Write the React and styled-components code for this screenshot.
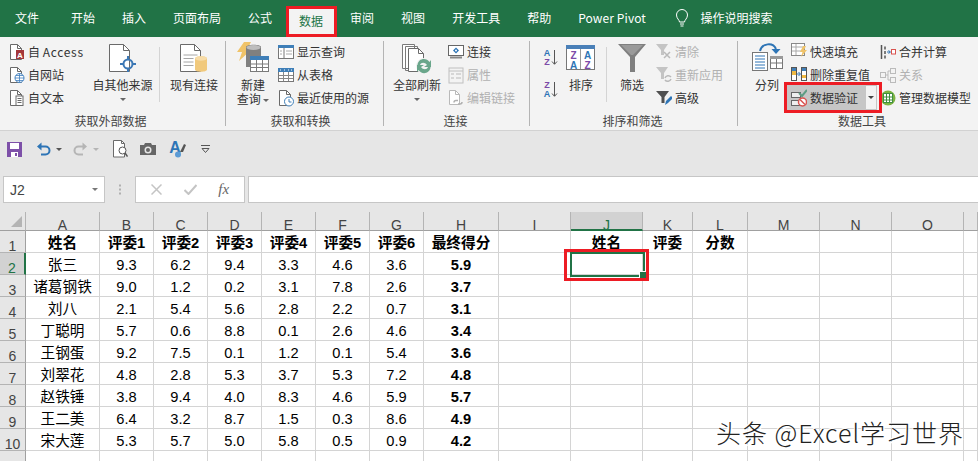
import React from 'react';
import styled, { createGlobalStyle } from 'styled-components';

const CJK = '"Noto Sans CJK SC", "Noto Sans", sans-serif';
const Global = createGlobalStyle`
  html, body { margin: 0; padding: 0; background: #e6e6e6; }
  #root { width: 978px; height: 461px; overflow: hidden; }
`;
const Page = styled.div`
  width: 978px; height: 461px; overflow: hidden; position: relative;
  background: #e6e6e6; font-family: ${CJK}; font-size: 12px; color: #333;
`;
const TabBar = styled.div`
  height: 37px; background: #217346; display: flex; align-items: stretch; box-sizing: border-box;
`;
const Tab = styled.div`
  display: flex; align-items: center; color: #fff; white-space: nowrap; position: relative;
  padding: ${p => p.$first ? '0 18.5px 2px 15px' : '0 13.5px 2px'};
  ${p => p.$active && `
    background: #f3f3f3; color: #217346; margin: 6px 0 0; padding: 0 10.5px 2px;
    border: 3px solid #ed1c24; height: 31px; box-sizing: border-box;
  `}
`;
const LatinTab = styled(Tab)`letter-spacing: .1px;`;
const Help = styled.div`
  display: flex; align-items: center; color: #fff; margin-left: 15px; gap: 12px; padding-bottom: 2px;
`;
const Ribbon = styled.div`
  height: 93px; background: #f3f3f3; border-bottom: 1px solid #d2d2d2; display: flex;
`;
const Group = styled.div`
  width: ${p => p.$w}px; margin-top: 4px; height: 85px; display: flex; flex-direction: column;
  flex: none; border-right: ${p => p.$last ? 0 : 1}px solid #b4b4b4; box-sizing: border-box;
`;
const GroupBody = styled.div`
  flex: 1; display: flex; padding-left: ${p => p.$pad}px; min-height: 0;
`;
const GroupLabel = styled.div`
  height: 16px; line-height: 22px; text-align: center; color: #444;
  transform: translateX(${p => p.$dx || 0}px);
`;
const Big = styled.div`
  width: ${p => p.$w}px; flex: none; display: flex; flex-direction: column; align-items: center;
  color: #333; line-height: 14px; white-space: nowrap;
`;
const BigIcon = styled.div`
  height: 37px; box-sizing: border-box; padding-bottom: ${p => p.$pb || 0}px;
  display: flex; align-items: flex-end; justify-content: center;
`;
const Caret = styled.span`
  display: inline-block; width: 0; height: 0; border: 3px solid transparent; border-top: 3px solid ${p => p.$c || '#666'};
  border-bottom: 0; vertical-align: middle; margin-left: ${p => p.$ml || 0}px;
`;
const CaretLine = styled.div`height: 14px; display: flex; align-items: center;`;
const Stack = styled.div`
  display: flex; flex-direction: column; flex: none; width: ${p => p.$w}px; margin-left: ${p => p.$ml || 0}px;
  margin-top: -1px;
`;
const Small = styled.div`
  height: 23px; display: flex; align-items: center; gap: 3px; white-space: nowrap; 
  color: ${p => p.$off ? '#b1b1b1' : '#333'};
`;
const SortStack = styled.div`
  display: flex; flex-direction: column; flex: none; width: 17px; padding-top: 7px; gap: 14px;
`;
const SmallIcon = styled.span`width: 16px; height: 18px; display: flex; flex: none;`;
const Latin = styled.span`letter-spacing: .7px;`;
const VLine = styled.div`
  width: 1px; height: 55px; background: #d4d4d4; margin: 6px ${p => p.$m}px 0; flex: none;
`;
const Validation = styled.div`
  position: relative; display: flex; margin: 0 0 0 -4px; height: 25px; width: 92px; align-items: stretch;
  &::after {
    content: ''; position: absolute; inset: -3px; border: 3px solid #ed1c24; pointer-events: none;
  }
`;
const ValidationMain = styled.div`
  width: 79px; background: #c6c6c6; display: flex; align-items: center; gap: 3px; padding-left: 4px; box-sizing: border-box;
`;
const ValidationDrop = styled.div`
  width: 11px; background: #f3f3f3; border: 1px solid #c6c6c6; border-width: 1px 1px 1px 0; box-sizing: border-box; display: flex; align-items: center; justify-content: center;
`;
const QuickBar = styled.div`
  height: 34px; padding-left: 7px; display: flex; align-items: center; background: #e6e6e6; margin-top: 1px;
`;
const QuickItem = styled.span`
  display: flex; align-items: center; margin-right: ${p => p.$mr}px; flex: none;
`;
const FormulaRow = styled.div`
  height: 27px; margin-top: 10px; padding-left: 3px; display: flex; align-items: stretch;
`;
const NameBox = styled.div`
  width: 102px; box-sizing: border-box; background: #fff; border: 1px solid #c6c6c6; display: flex; align-items: center;
  justify-content: space-between; padding: 0 6px; font: 14px "Liberation Sans", sans-serif; color: #444;
`;
const Dots = styled.div`
  width: 30px; display: flex; align-items: center; justify-content: center;
`;
const FxBox = styled.div`
  width: 110px; box-sizing: border-box; background: #fff; border: 1px solid #c6c6c6; display: flex; align-items: center;
  justify-content: space-around; padding: 0 4px;
`;
const Fx = styled.i`
  font: italic 15px "Liberation Serif", serif; color: #666; 
`;
const FormulaInput = styled.div`
  flex: 1; margin-left: 3px; background: #fff; border: 1px solid #c6c6c6; border-right: 0;
`;
const Sheet = styled.div`
  margin-top: 9px; display: grid; 
  grid-template-columns: 26px 74px repeat(6, 54px) 75px 72px 72px 50px 55px 72px 72px 72px 14px;
  grid-template-rows: 19px; grid-auto-rows: 22px;
  font: 14.67px "Liberation Sans", ${CJK}; color: #000;
`;
const Corner = styled.div`
  background: #e6e6e6; border-right: 1px solid #b4b4b4; border-bottom: 1px solid #a0a0a0; position: relative; box-sizing: border-box;
  display: flex; align-items: flex-end; justify-content: flex-end; padding: 0 3px 3px 0;
`;
const ColHead = styled.div`
  background: ${p => p.$on ? '#d2d2d2' : '#e6e6e6'}; box-sizing: border-box; text-align: center; padding-top: 8px; line-height: 10px;
  border-right: 1px solid #b4b4b4; border-bottom: ${p => p.$on ? '2px solid #217346' : '1px solid #a0a0a0'};
  color: ${p => p.$on ? '#217346' : '#444'}; font-size: 14px;
`;
const RowHead = styled.div`
  background: ${p => p.$on ? '#d2d2d2' : '#e6e6e6'}; box-sizing: border-box; text-align: center; padding-top: 10px; line-height: 10px;
  border-right: ${p => p.$on ? '2px solid #217346' : '1px solid #a0a0a0'}; border-bottom: 1px solid #b4b4b4;
  color: ${p => p.$on ? '#217346' : '#444'}; font-size: 14px;
`;
const Cell = styled.div`
  background: #fff; box-sizing: border-box; text-align: center; padding-top: 5px; line-height: 15px; white-space: nowrap;
  border-right: 1px solid #d4d4d4; border-bottom: 1px solid #d4d4d4; position: relative;
  font-weight: ${p => p.$bold ? 700 : 400};
  ${p => p.$sel && `
    z-index: 2;
    &::before { content: ''; position: absolute; left: -1px; top: -1px; right: -3px; bottom: -3px; border: 2px solid #217346; }
    &::after { content: ''; position: absolute; left: -7px; top: -4px; right: -7px; bottom: -7px; border: 3px solid #ed1c24; }
  `}
`;
const Handle = styled.span`
  position: absolute; right: -4px; bottom: -4px; width: 7px; height: 7px; background: #217346;
  border: solid #fff; border-width: 1px 0 0 1px; box-sizing: border-box; z-index: 1;
`;
const Watermark = styled.div`
  position: absolute; left: 716px; top: 414px; white-space: nowrap; font: 300 25px "Noto Sans CJK SC", sans-serif; color: #222;
  letter-spacing: 1px; text-shadow: 1.5px 1.5px 0 #fff, -1px -1px 0 #fff;
`;

/* ---------- icons ---------- */
const S = ({ w = 16, h = 18, children }) => <svg width={w} height={h} viewBox={`0 0 ${w} ${h}`} style={{ display: 'block', flex: 'none' }}>{children}</svg>;
const Doc = ({ x = 1.5, y = 1.5, w = 11, h = 15, f = 4, c = '#6a6a6a' }) => (
  <g fill="none" stroke={c}>
    <path d={`M${x} ${y}h${w - f}l${f} ${f}v${h - f}h-${w}z`} fill="#fff" />
    <path d={`M${x + w - f} ${y}v${f}h${f}`} />
  </g>
);
const IAccess = () => <S><Doc /><rect x="7" y="7" width="8" height="9" fill="#a4373a" /><text x="11" y="14.5" fontSize="8" fontWeight="700" textAnchor="middle" fill="#fff" fontFamily="Liberation Sans">A</text></S>;
const IWeb = () => <S><Doc /><circle cx="10.5" cy="12" r="4.5" fill="#fff" stroke="#3f7fbf" /><path d="M6 12h9M10.5 7.5v9M7 9.5h7M7 14.5h7" stroke="#3f7fbf" strokeWidth=".8" /></S>;
const IText = () => <S><Doc /><rect x="7" y="7" width="7" height="9.5" fill="#fff" stroke="#6a6a6a" /><path d="M8.5 9.5h4M8.5 11.5h4M8.5 13.5h4" stroke="#6a6a6a" /></S>;
const IOther = () => (
  <S w={30} h={32}>
    <Doc x={1.5} y={1.5} w={20} h={27} f={6} />
    <g fill="none" stroke="#3c78b5" strokeWidth="2">
      <circle cx="20" cy="21" r="4.5" /><path d="M20 13v4M20 25v4M12 21h4M24 21h4" />
    </g>
  </S>
);
const IExisting = () => (
  <S w={30} h={32}>
    <Doc x={1.5} y={1.5} w={20} h={27} f={6} />
    <path d="M4.5 12h14M4.5 15.5h10M4.5 19h10M4.5 22.5h10" stroke="#a6a6a6" />
    <path d="M16 15.5c0-3 12-3 12 0v11c0 3-12 3-12 0z" fill="#f1c97c" />
    <ellipse cx="22" cy="15.5" rx="6" ry="2.2" fill="#f7dca8" />
  </S>
);
const INewQuery = () => (
  <S w={34} h={34}>
    <path d="M8 1h7l-4 8h4L3 20l3-9H1z" fill="#f0c368" />
    <path d="M10 6c0-3 15-3 15 0v20H10z" fill="#808080" />
    <ellipse cx="17.5" cy="6.5" rx="7" ry="2.4" fill="#bdbdbd" />
    <rect x="14.5" y="15.5" width="18" height="15" fill="#fff" stroke="#7a7a7a" />
    <rect x="14" y="15" width="19" height="4" fill="#3f7fb8" />
    <path d="M20.5 19v11M26.5 19v11M15 23h17M15 26.5h17" stroke="#7a7a7a" />
  </S>
);
const ITable = () => <S><rect x=".5" y="2.5" width="15" height="13" fill="#fff" stroke="#777" /><rect x="0" y="2" width="16" height="3" fill="#3f7fb8" /><path d="M6 5v10" stroke="#777" /><path d="M8 8h6M8 11h6M2 8h2M2 11h2" stroke="#aaa" /></S>;
const ITableDot = () => <S><rect x=".5" y="2.5" width="15" height="13" fill="#fff" stroke="#777" /><rect x="0" y="2" width="16" height="4" fill="#3f7fb8" /><path d="M2 4h1M6 4h1M10 4h1M13 4h1" stroke="#fff" /><path d="M5.5 6v9M10.5 6v9M1 9.5h14M1 12.5h14" stroke="#888" /></S>;
const IRecent = () => <S><Doc /><circle cx="11" cy="12.5" r="4.5" fill="#fff" stroke="#3f7fb8" /><path d="M11 10v3h2.5" fill="none" stroke="#3f7fb8" /></S>;
const IRefresh = () => (
  <S w={32} h={32}>
    <path d="M1.5 1.5h12v24h-12zM4.5 3.5h12v24h-12z" fill="#fff" stroke="#7a7a7a" />
    <Doc x={7.5} y={5.5} w={15} h={23} f={5} />
    <circle cx="23" cy="23" r="8" fill="#f3f3f3" />
    <path d="M16.5 22c.5-7 9-8 12-3l1.500-2v7h-7l3-2c-2-3-6-3-7 0zM29.500 24c-.5 7-9 8-12 3l-1.500 2v-7h7l-3 2c2 3 6 3 7 0z" fill="#6aa68b" />
  </S>
);
const IConn = () => <S><rect x=".5" y="2.5" width="15" height="10" fill="#fff" stroke="#666" /><path d="M2 14.500h12" stroke="#888" strokeWidth="2" /><path d="M8 4.500l3 3-3 3-3-3z" fill="#2e75b6" /><circle cx="8" cy="7.500" r="1" fill="#fff" /></S>;
const IProps = () => <S><rect x="1" y="2" width="14" height="15" fill="none" stroke="#c0c0c0" /><path d="M1 5h14" stroke="#c0c0c0" /><path d="M3 8h3M8 8h5M3 12h3M8 12h5" stroke="#b9b9b9" /></S>;
const ILinks = () => <S><Doc w={10} h={14} c="#b9b9b9" /><path d="M6 13.500a2 2 0 0 1 2-2h2M14 13a2 2 0 0 1-2 2h-2" fill="none" stroke="#b0b0b0" strokeWidth="1.500" /></S>;
const SortText = ({ x, y, c, s = 9, children }) => <text x={x} y={y} fontSize={s} fontFamily="Liberation Sans" fontWeight="700" textAnchor="middle" fill={c}>{children}</text>;
const ISort = ({ top, bot, tc, bc }) => (
  <S w={15} h={18}>
    <SortText x={4} y={8} c={tc}>{top}</SortText>
    <SortText x={4} y={17} c={bc}>{bot}</SortText>
    <path d="M11.500 2v14M9 13.500l2.500 2.800 2.500-2.800" fill="none" stroke="#555" />
  </S>
);
const ISortBig = () => (
  <S w={30} h={26}>
    <rect x=".5" y=".5" width="28" height="24" fill="#fff" stroke="#777" />
    <rect x="0" y="0" width="29" height="4" fill="#4a80b8" />
    <path d="M14.500 4v20" stroke="#999" />
    <SortText x={7.5} y={14} c="#7c4ba8" s={10}>Z</SortText>
    <SortText x={7.5} y={24} c="#2e75b6" s={10}>A</SortText>
    <SortText x={21.5} y={14} c="#2e75b6" s={10}>A</SortText>
    <SortText x={21.5} y={24} c="#7c4ba8" s={10}>Z</SortText>
  </S>
);
const IFunnel = () => <S w={28} h={28}><path d="M0 0h28L17 13v15h-5V13z" fill="#7f7f7f" /><path d="M3 1h22L15 11h-2z" fill="#9a9a9a" /></S>;
const IClear = () => <S><path d="M0 1h12L8 7v5H5V7z" fill="#c4c4c4" /><path d="M8 9l6 6M14 9l-6 6" stroke="#b9b9b9" strokeWidth="1.500" /></S>;
const IReapply = () => <S><path d="M0 1h12L8 7v6H5V7z" fill="#c4c4c4" /><path d="M9 12a3.500 3.500 0 0 1 6-1M15 13a3.500 3.500 0 0 1-6 1" fill="none" stroke="#b9b9b9" strokeWidth="1.500" /></S>;
const IAdvanced = () => <S><path d="M0 2h13L8.500 8v6h-3V8z" fill="#505050" /><path d="M9 16l1-4 5-5 2 2-5 5z" fill="#2e75b6" /></S>;
const ISplit = () => (
  <S w={31} h={29}>
    <rect x=".5" y="10.500" width="15" height="18" fill="#fff" stroke="#777" />
    <path d="M3 14h10M3 17h10M3 20h10M3 23h10M3 26h10" stroke="#2e75b6" />
    <rect x="18.500" y="14.500" width="12" height="12" fill="#fff" stroke="#777" />
    <rect x="18" y="14" width="13" height="3" fill="#9a9a9a" />
    <path d="M24.500 17v9M19 21h11" stroke="#777" />
    <path d="M8 9C10 1 21 0 24 7" fill="none" stroke="#2e75b6" strokeWidth="2" />
    <path d="M19.500 7h9l-4.500 5z" fill="#2e75b6" />
  </S>
);
const IFlash = () => <S><rect x=".5" y="1.500" width="13" height="12" fill="#fff" stroke="#888" /><path d="M1 5h12M1 9h12M5 2v11" stroke="#aaa" /><path d="M12 4h3l-2 4h3l-6 7 1.500-5h-2.500z" fill="#f0c368" /></S>;
const IDup = () => <S><rect x=".5" y="2.500" width="5" height="13" fill="#fff" stroke="#555" /><rect x="1" y="6" width="4" height="4" fill="#f0b942" /><rect x="1" y="3" width="4" height="3" fill="#3f7fb8" /><rect x="10.500" y="2.500" width="5" height="13" fill="#fff" stroke="#555" /><rect x="11" y="3" width="4" height="3" fill="#3f7fb8" /><rect x="11" y="10" width="4" height="3" fill="#f0b942" /><path d="M6 9h3M7.500 7l2 2-2 2" fill="none" stroke="#2e75b6" /></S>;
const IValid = () => <S w={16} h={18}><rect x=".5" y="3.500" width="9" height="5" fill="#eee" stroke="#666" /><rect x=".5" y="11.500" width="8" height="5" fill="#eee" stroke="#666" /><path d="M8 4l3 3 5-6" fill="none" stroke="#5e9c83" strokeWidth="2" /><circle cx="11.500" cy="13" r="4" fill="#fff" stroke="#d9534f" strokeWidth="1.500" /><path d="M9 10.500l5 5" stroke="#d9534f" strokeWidth="1.500" /></S>;
const IMerge = () => <S><path d="M1.500 2v14M5 3.500v3M5 8v3M5 12.500v3" fill="none" stroke="#555" strokeWidth="1.500" /><path d="M7 9h3M8.500 7.500l2 1.500-2 1.500" fill="none" stroke="#2e75b6" /><rect x="11.500" y="6.500" width="4" height="4.500" fill="#fff" stroke="#d9534f" /></S>;
const IRel = () => <S><g fill="#f3f3f3" stroke="#bbb"><rect x=".5" y="6.500" width="5" height="5" /><rect x="10.500" y="2.500" width="5" height="5" /><rect x="10.500" y="11.500" width="5" height="5" /></g><path d="M5.500 9H8M8 5h2.500M8 14h2.500M8 5v9" fill="none" stroke="#bbb" /></S>;
const IModel = () => <S><circle cx="8" cy="9" r="7.500" fill="#7cb342" /><rect x="3.500" y="4.500" width="9" height="9" fill="#fff" stroke="#3f8f3f" /><path d="M6.500 5v8M9.500 5v8M4 8h8M4 11h8" stroke="#3f8f3f" /></S>;
const IBulb = () => <S w={14} h={18}><path d="M4.500 13c0-2-3-3.500-3-7a5.500 5.500 0 0 1 11 0c0 3.500-3 5-3 7z" fill="none" stroke="#fff" /><path d="M5 15h4M5.500 17h3" stroke="#fff" /></S>;
const ISave = () => <S w={15} h={15}><path d="M0 0h15v15H0z" fill="#7d50a8" /><rect x="3" y="1" width="9" height="6" fill="#fff" /><rect x="4" y="10" width="7" height="5" fill="#fff" /><rect x="8" y="11" width="2" height="3" fill="#7d50a8" /></S>;
const IUndo = ({ c = '#2e75b6', flip }) => (
  <S w={15} h={14}>
    <g transform={flip ? 'translate(15 0) scale(-1 1)' : undefined}>
      <path d="M3 4.500h6.500a4 4 0 0 1 0 8H5" fill="none" stroke={c} strokeWidth="2" />
      <path d="M5.500 .5L1 4.500l4.500 4z" fill={c} />
    </g>
  </S>
);
const IPreview = () => <S w={15} h={18}><Doc x={.5} y={.5} w={11} h={16.500} f={3} /><circle cx="9.500" cy="10.500" r="3.500" fill="#fff" stroke="#555" /><path d="M12 13l2.500 3.500" stroke="#555" strokeWidth="1.500" /></S>;
const ICamera = () => <S w={16} h={14}><path d="M0 3h4l1-2h6l1 2h4v10H0z" fill="#666" /><circle cx="8" cy="8" r="3.500" fill="#e6e6e6" /><circle cx="8" cy="8" r="2" fill="#666" /></S>;
const IABrush = () => (
  <S w={18} h={18}>
    <text x="6" y="13" fontSize="16" fontFamily="Liberation Sans" fontWeight="700" textAnchor="middle" fill="#2e75b6">A</text>
    <path d="M11 12l4-8 2 1-3 7z" fill="#555" /><circle cx="9" cy="14.500" r="3" fill="#5b9bd5" />
  </S>
);
const IMore = () => <S w={9} h={9}><path d="M0 .5h9" stroke="#555" /><path d="M1 3.500h7L4.500 7.500z" fill="none" stroke="#555" /></S>;
const IX = () => <S w={11} h={11}><path d="M.5 .5l10 10M10.500 .5l-10 10" stroke="#c4c4c4" strokeWidth="1.500" /></S>;
const ICheck = () => <S w={13} h={11}><path d="M.5 6l4 4 8-9" fill="none" stroke="#c4c4c4" strokeWidth="2" /></S>;
const IDots = () => <S w={3} h={11}><path d="M1 .5v2M1 4.500v2M1 8.500v2" stroke="#b0b0b0" strokeWidth="2" /></S>;
const ICorner = () => <S w={11} h={11}><path d="M11 0v11H0z" fill="#b4b4b4" /></S>;

/* ---------- data ---------- */
const columns = ['A','B','C','D','E','F','G','H','I','J','K','L','M','N','O',''];
const rows = [
  ['姓名','评委1','评委2','评委3','评委4','评委5','评委6','最终得分','','姓名','评委','分数'],
  ['张三','9.3','6.2','9.4','3.3','4.6','3.6','5.9'],
  ['诸葛钢铁','9.0','1.2','0.2','3.1','7.8','2.6','3.7'],
  ['刘八','2.1','5.4','5.6','2.8','2.2','0.7','3.1'],
  ['丁聪明','5.7','0.6','8.8','0.1','2.6','4.6','3.4'],
  ['王钢蛋','9.2','7.5','0.1','1.2','0.1','5.4','3.6'],
  ['刘翠花','4.8','2.8','5.3','3.7','5.3','7.2','4.8'],
  ['赵铁锤','3.8','9.4','4.0','8.3','4.6','5.9','5.7'],
  ['王二美','6.4','3.2','8.7','1.5','0.3','8.6','4.9'],
  ['宋大莲','5.3','5.7','5.0','5.8','0.5','0.9','4.2'],
  [],
];
const SmallBtn = ({ icon, off, children }) => <Small $off={off}><SmallIcon>{icon}</SmallIcon><span>{children}</span></Small>;

export default function App() {
  return (
    <Page>
      <Global />
      <TabBar>
        <Tab $first>文件</Tab><Tab>开始</Tab><Tab>插入</Tab><Tab>页面布局</Tab><Tab>公式</Tab>
        <Tab $active>数据</Tab><Tab>审阅</Tab><Tab>视图</Tab><Tab>开发工具</Tab><Tab>帮助</Tab>
        <LatinTab>Power Pivot</LatinTab>
        <Help><IBulb />操作说明搜索</Help>
      </TabBar>
      <Ribbon>
        <Group $w={226}>
          <GroupBody $pad={9}>
            <Stack $w={81}>
              <SmallBtn icon={<IAccess />}>自 <Latin>Access</Latin></SmallBtn>
              <SmallBtn icon={<IWeb />}>自网站</SmallBtn>
              <SmallBtn icon={<IText />}>自文本</SmallBtn>
            </Stack>
            <Big $w={65}><BigIcon $pb={3}><IOther /></BigIcon>自其他来源<CaretLine><Caret /></CaretLine></Big>
            <VLine $m={4} />
            <Big $w={60}><BigIcon $pb={3}><IExisting /></BigIcon>现有连接</Big>
          </GroupBody>
          <GroupLabel $dx={-2}>获取外部数据</GroupLabel>
        </Group>
        <Group $w={158}>
          <GroupBody $pad={2}>
            <Big $w={50}><BigIcon $pb={3}><INewQuery /></BigIcon>新建<span>查询 <Caret /></span></Big>
            <Stack $w={104}>
              <SmallBtn icon={<ITable />}>显示查询</SmallBtn>
              <SmallBtn icon={<ITableDot />}>从表格</SmallBtn>
              <SmallBtn icon={<IRecent />}>最近使用的源</SmallBtn>
            </Stack>
          </GroupBody>
          <GroupLabel $dx={-4}>获取和转换</GroupLabel>
        </Group>
        <Group $w={146}>
          <GroupBody $pad={5}>
            <Big $w={56}><BigIcon $pb={3}><IRefresh /></BigIcon>全部刷新<CaretLine><Caret /></CaretLine></Big>
            <Stack $w={80} $ml={3}>
              <SmallBtn icon={<IConn />}>连接</SmallBtn>
              <SmallBtn icon={<IProps />} off>属性</SmallBtn>
              <SmallBtn icon={<ILinks />} off>编辑链接</SmallBtn>
            </Stack>
          </GroupBody>
          <GroupLabel $dx={-1}>连接</GroupLabel>
        </Group>
        <Group $w={208}>
          <GroupBody $pad={13}>
            <SortStack>
              <ISort top="A" bot="Z" tc="#2e75b6" bc="#7c4ba8" />
              <ISort top="Z" bot="A" tc="#7c4ba8" bc="#2e75b6" />
            </SortStack>
            <Big $w={42}><BigIcon $pb={7}><ISortBig /></BigIcon>排序</Big>
            <VLine $m={4} />
            <Big $w={42}><BigIcon $pb={6}><IFunnel /></BigIcon>筛选</Big>
            <Stack $w={70} $ml={3}>
              <SmallBtn icon={<IClear />} off>清除</SmallBtn>
              <SmallBtn icon={<IReapply />} off>重新应用</SmallBtn>
              <SmallBtn icon={<IAdvanced />}>高级</SmallBtn>
            </Stack>
          </GroupBody>
          <GroupLabel $dx={-1}>排序和筛选</GroupLabel>
        </Group>
        <Group $w={240} $last>
          <GroupBody $pad={11}>
            <Big $w={36}><BigIcon $pb={7}><ISplit /></BigIcon>分列</Big>
            <Stack $w={91} $ml={6}>
              <SmallBtn icon={<IFlash />}>快速填充</SmallBtn>
              <SmallBtn icon={<IDup />}>删除重复值</SmallBtn>
              <Validation>
                <ValidationMain><SmallIcon as="span"><IValid /></SmallIcon><span>数据验证</span></ValidationMain>
                <ValidationDrop><Caret $c="#444" /></ValidationDrop>
              </Validation>
            </Stack>
            <Stack $w={98} $ml={-2}>
              <SmallBtn icon={<IMerge />}>合并计算</SmallBtn>
              <SmallBtn icon={<IRel />} off>关系</SmallBtn>
              <SmallBtn icon={<IModel />}>管理数据模型</SmallBtn>
            </Stack>
          </GroupBody>
          <GroupLabel $dx={4}>数据工具</GroupLabel>
        </Group>
      </Ribbon>
      <QuickBar>
        <QuickItem $mr={14}><ISave /></QuickItem>
        <QuickItem $mr={5}><IUndo /></QuickItem>
        <QuickItem $mr={11}><Caret $c="#555" /></QuickItem>
        <QuickItem $mr={5}><IUndo c="#b5b5b5" flip /></QuickItem>
        <QuickItem $mr={14}><Caret $c="#b5b5b5" /></QuickItem>
        <QuickItem $mr={12}><IPreview /></QuickItem>
        <QuickItem $mr={13}><ICamera /></QuickItem>
        <QuickItem $mr={14}><IABrush /></QuickItem>
        <QuickItem $mr={0}><IMore /></QuickItem>
      </QuickBar>
      <FormulaRow>
        <NameBox>J2<Caret $c="#777" /></NameBox>
        <Dots><IDots /></Dots>
        <FxBox><IX /><ICheck /><Fx>fx</Fx></FxBox>
        <FormulaInput />
      </FormulaRow>
      <Sheet>
        <Corner><ICorner /></Corner>
        {columns.map((c, i) => <ColHead key={i} $on={c === 'J'}>{c}</ColHead>)}
        {rows.map((r, ri) => (
          <React.Fragment key={ri}>
            <RowHead $on={ri === 1}>{ri + 1}</RowHead>
            {columns.map((_, ci) => (
              <Cell key={ci} $bold={ri === 0 || ci === 7} $sel={ri === 1 && ci === 9}>
                {r[ci] || ''}
                {ri === 1 && ci === 9 && <Handle />}
              </Cell>
            ))}
          </React.Fragment>
        ))}
      </Sheet>
      <Watermark>头条 @Excel学习世界</Watermark>
    </Page>
  );
}
